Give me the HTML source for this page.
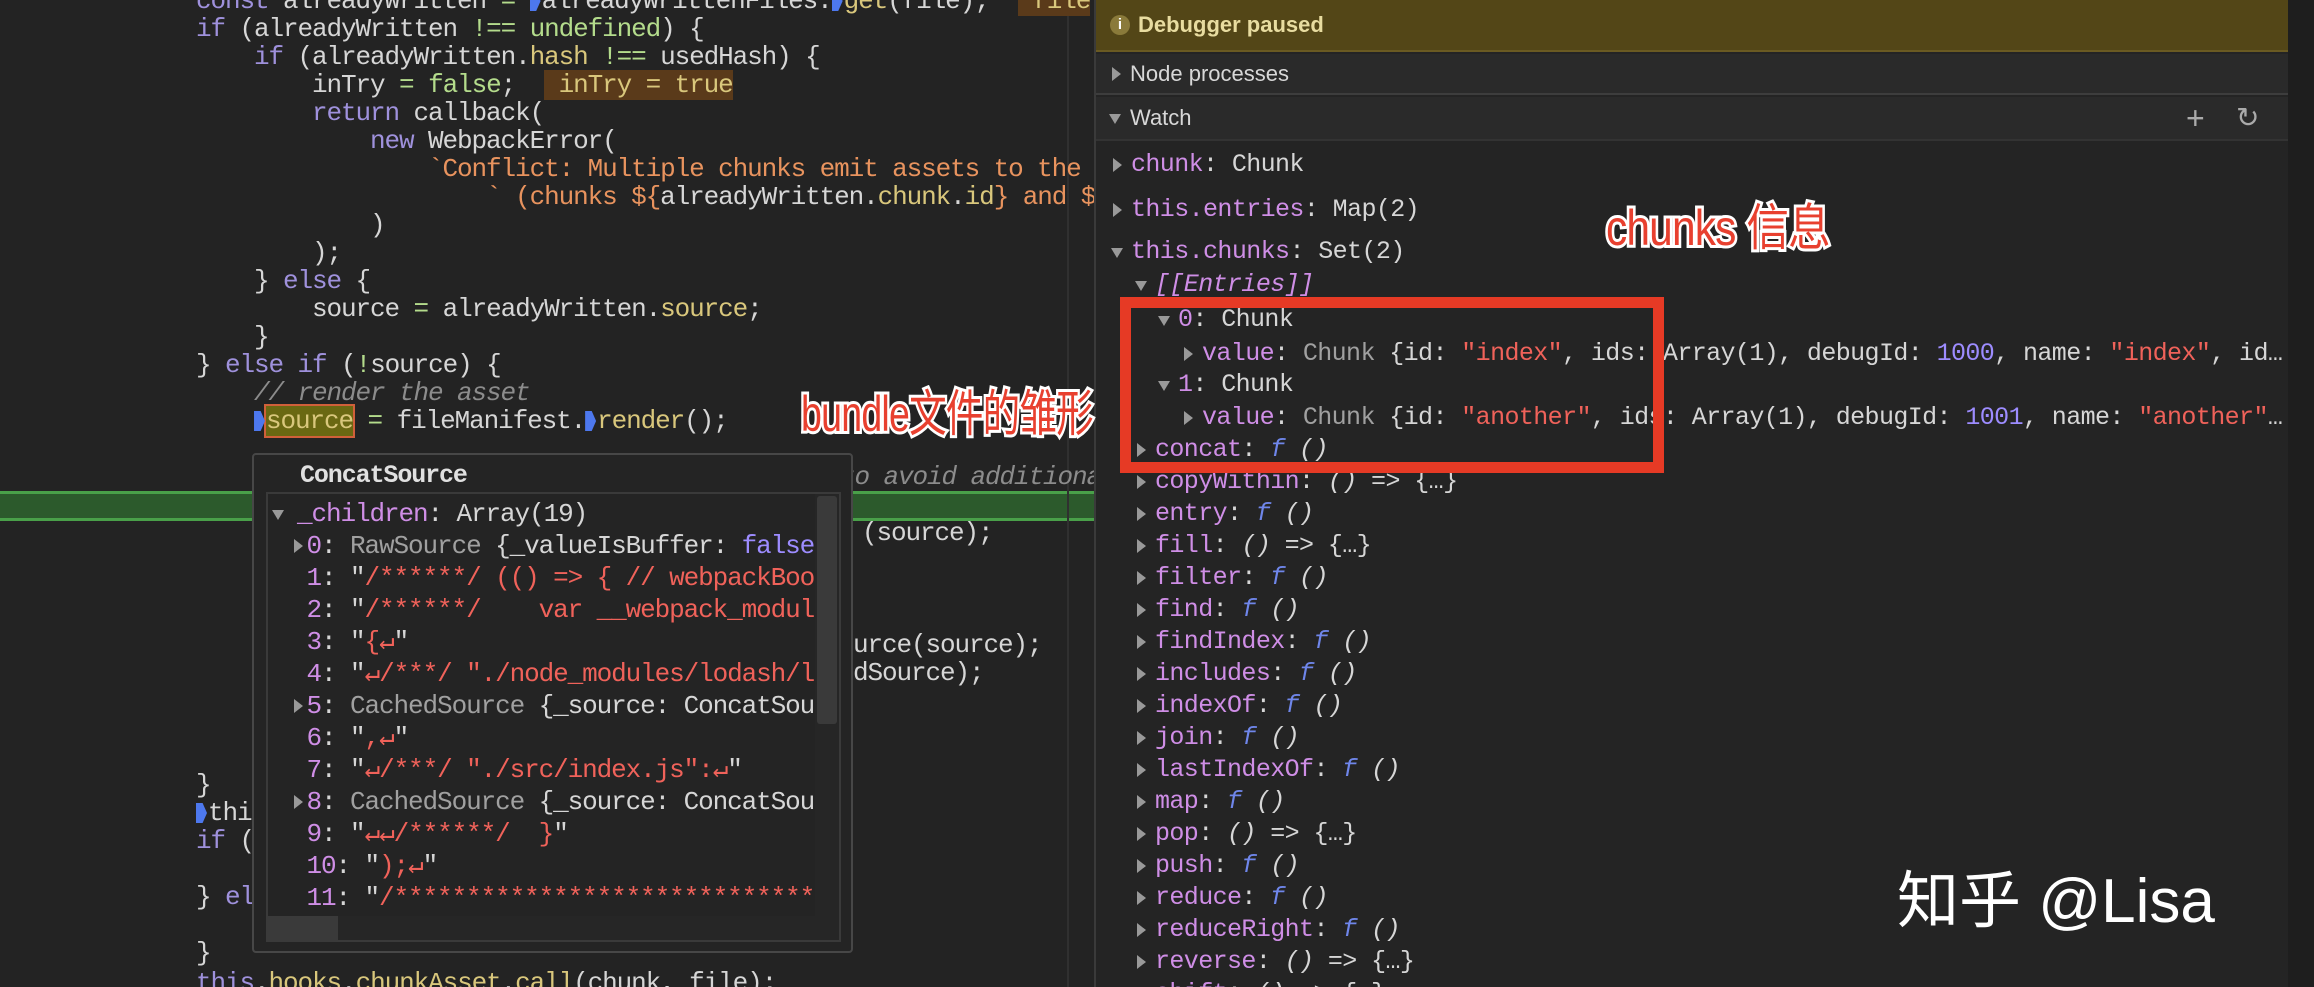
<!DOCTYPE html>
<html><head><meta charset="utf-8"><style>
*{margin:0;padding:0;box-sizing:border-box}
body{width:2314px;height:987px;overflow:hidden;background:#232323;position:relative;font-family:"Liberation Mono",monospace;font-size:26px;letter-spacing:-1.1px;color:#d6d6d6}
.l{position:absolute;white-space:pre;height:28px;line-height:28px}
.k{color:#9f91dc}.g{color:#b4dc8c}.p{color:#d9c77c}.s{color:#e8935e}.c{color:#8c8c8c;font-style:italic}
.bp{display:inline-block;width:11px;height:20px;background:#4d78ee;clip-path:polygon(0 0,60% 0,100% 50%,60% 100%,0 100%);vertical-align:-3px;margin-right:1px}
.r{position:absolute;white-space:pre;height:32px;line-height:32px}
.n{color:#cf8ee6}.v{color:#d6d6d6}.f{color:#6f86ea;font-style:italic}.gr{color:#a0a0a0}.st{color:#f0625a}.num{color:#9d8cff}
.ar{display:inline-block;width:0;height:0;border-left:9px solid #999;border-top:7px solid transparent;border-bottom:7px solid transparent;position:absolute}
.ad{display:inline-block;width:0;height:0;border-top:10px solid #999;border-left:6px solid transparent;border-right:6px solid transparent;position:absolute}
.t{position:absolute;white-space:pre;height:32px;line-height:32px}
.ann{position:absolute;white-space:pre;font-family:"Liberation Sans","Noto Sans CJK SC",sans-serif;font-weight:normal;color:#e8402f;-webkit-text-stroke:6px #fff;paint-order:stroke fill;letter-spacing:-1px;transform-origin:0 0}
</style></head><body>
<!-- code pane -->
<div style="position:absolute;left:0;top:0;width:1094px;height:987px;background:#232323;overflow:hidden">
<div style="position:absolute;left:0;top:491px;width:1094px;height:30px;background:#2c5a2c;border-top:3px solid #49a049;border-bottom:3px solid #49a049"></div>
<div style="position:absolute;left:1067px;top:0;width:2px;height:987px;background:#303030"></div>
<div class="l" style="left:196px;top:-13px"><span class="k">const</span> alreadyWritten <span class="g">=</span> <span class="bp"></span>alreadyWrittenFiles.<span class="bp"></span><span class="p">get</span>(file);  <span style="background:#5a3a1a;color:#d9c77c"> file</span></div>
<div class="l" style="left:196px;top:15px"><span class="k">if</span> (alreadyWritten <span class="g">!==</span> <span class="g">undefined</span>) {</div>
<div class="l" style="left:196px;top:43px">    <span class="k">if</span> (alreadyWritten.<span class="p">hash</span> <span class="g">!==</span> usedHash) {</div>
<div class="l" style="left:196px;top:71px">        inTry <span class="g">=</span> <span class="g">false</span>;  <span style="background:#5a3a1a;color:#d9c77c"> inTry = true</span></div>
<div class="l" style="left:196px;top:99px">        <span class="k">return</span> callback(</div>
<div class="l" style="left:196px;top:127px">            <span class="k">new</span> WebpackError(</div>
<div class="l" style="left:196px;top:155px">                <span class="s">`Conflict: Multiple chunks emit assets to the same</span></div>
<div class="l" style="left:196px;top:183px">                    <span class="s">` (chunks ${</span>alreadyWritten.<span class="p">chunk</span>.<span class="p">id</span><span class="s">} and ${</span></div>
<div class="l" style="left:196px;top:211px">            )</div>
<div class="l" style="left:196px;top:239px">        );</div>
<div class="l" style="left:196px;top:267px">    } <span class="k">else</span> {</div>
<div class="l" style="left:196px;top:295px">        source <span class="g">=</span> alreadyWritten.<span class="p">source</span>;</div>
<div class="l" style="left:196px;top:323px">    }</div>
<div class="l" style="left:196px;top:351px">} <span class="k">else if</span> (<span class="g">!</span>source) {</div>
<div class="l" style="left:196px;top:379px">    <span class="c">// render the asset</span></div>
<div class="l" style="left:196px;top:407px">    <span class="bp"></span><span style="background:#6a6812;color:#d9c77c;outline:2px solid #d0603a">source</span> <span class="g">=</span> fileManifest.<span class="bp"></span><span class="p">render</span>();</div>
<div class="l" style="left:840px;top:463px"><span class="c">to avoid additional</span></div>
<div class="l" style="left:862px;top:519px">(source);</div>
<div class="l" style="left:853px;top:631px">urce(source);</div>
<div class="l" style="left:853px;top:659px">dSource);</div>
<div class="l" style="left:196px;top:771px">}</div>
<div class="l" style="left:196px;top:799px"><span class="bp"></span>this</div>
<div class="l" style="left:196px;top:827px"><span class="k">if</span> (</div>
<div class="l" style="left:196px;top:883px">} <span class="k">el</span></div>
<div class="l" style="left:196px;top:939px">}</div>
<div class="l" style="left:196px;top:969px"><span class="k">this</span>.<span class="p">hooks</span>.<span class="p">chunkAsset</span>.<span class="p">call</span>(chunk, file);</div>
</div>
<!-- tooltip -->
<div style="position:absolute;left:252px;top:453px;width:601px;height:500px;background:#242424;border:2px solid #474747;border-radius:4px;overflow:hidden">
<div style="position:absolute;left:46px;top:6px;font-weight:bold;color:#e0e0e0;font-size:25px;line-height:30px;height:30px">ConcatSource</div>
<div style="position:absolute;left:12px;top:37px;width:575px;height:450px;border:2px solid #3a3a3a"></div>
<div style="position:absolute;left:561px;top:39px;width:24px;height:446px;background:#262626"></div>
<div style="position:absolute;left:563px;top:41px;width:20px;height:228px;background:#3a3a3a;border-radius:3px"></div>
<div style="position:absolute;left:14px;top:461px;width:547px;height:24px;background:#262626"></div>
<div style="position:absolute;left:14px;top:461px;width:70px;height:24px;background:#3a3a3a"></div>
<div style="position:absolute;left:14px;top:43px;width:547px;height:418px;overflow:hidden">
<div class="t" style="left:0;top:0"><span class="ad" style="left:4px;top:12px"></span>  <span class="n">_children</span>: Array(19)</div>
<div class="t" style="left:24px;top:32px"><span class="ar" style="left:2px;top:9px"></span> <span class="n">0</span>: <span class="gr">RawSource</span> {_valueIsBuffer: <span style="color:#9d8cff">false</span>, ...}</div>
<div class="t" style="left:24px;top:64px"> <span class="n">1</span>: "<span class="st">/******/ (() => { // webpackBootstrap</span></div>
<div class="t" style="left:24px;top:96px"> <span class="n">2</span>: "<span class="st">/******/    var __webpack_modules__</span></div>
<div class="t" style="left:24px;top:128px"> <span class="n">3</span>: "<span class="st">{↵</span>"</div>
<div class="t" style="left:24px;top:160px"> <span class="n">4</span>: "<span class="st">↵/***/ "./node_modules/lodash/lodash.js"</span></div>
<div class="t" style="left:24px;top:192px"><span class="ar" style="left:2px;top:9px"></span> <span class="n">5</span>: <span class="gr">CachedSource</span> {_source: ConcatSource</div>
<div class="t" style="left:24px;top:224px"> <span class="n">6</span>: "<span class="st">,↵</span>"</div>
<div class="t" style="left:24px;top:256px"> <span class="n">7</span>: "<span class="st">↵/***/ "./src/index.js":↵</span>"</div>
<div class="t" style="left:24px;top:288px"><span class="ar" style="left:2px;top:9px"></span> <span class="n">8</span>: <span class="gr">CachedSource</span> {_source: ConcatSource</div>
<div class="t" style="left:24px;top:320px"> <span class="n">9</span>: "<span class="st">↵↵/******/  }</span>"</div>
<div class="t" style="left:24px;top:352px"> <span class="n">10</span>: "<span class="st">);↵</span>"</div>
<div class="t" style="left:24px;top:384px"> <span class="n">11</span>: "<span class="st">/**********************************</span></div>
</div>
</div>
<!-- right pane -->
<div style="position:absolute;left:1094px;top:0;width:1194px;height:987px;background:#242424;border-left:2px solid #3a3a3a;overflow:hidden;font-size:25px;letter-spacing:-0.6px">
<div style="position:absolute;left:0;top:0;width:1194px;height:52px;background:#534617;border-bottom:2px solid #6a5a22;font-family:'Liberation Sans',sans-serif;letter-spacing:0;font-size:22px;color:#e8dca0;font-weight:bold;line-height:50px;padding-left:42px">Debugger paused<span style="position:absolute;left:14px;top:15px;width:20px;height:20px;border-radius:50%;background:#8a7a3a;color:#fff;font-size:15px;line-height:20px;text-align:center">i</span></div>
<div style="position:absolute;left:0;top:54px;width:1194px;height:41px;background:#2a2a2a;border-bottom:2px solid #3d3d3d;font-family:'Liberation Sans',sans-serif;letter-spacing:0;font-size:22px;line-height:40px;color:#d8d8d8;padding-left:34px">Node processes<span class="ar" style="left:16px;top:13px"></span></div>
<div style="position:absolute;left:0;top:97px;width:1194px;height:44px;background:#2a2a2a;border-bottom:2px solid #333;font-family:'Liberation Sans',sans-serif;letter-spacing:0;font-size:22px;line-height:42px;color:#d8d8d8;padding-left:34px">Watch<span class="ad" style="left:13px;top:17px"></span><span style="position:absolute;left:1090px;top:0;color:#aaa;font-size:32px">+</span><span style="position:absolute;left:1140px;top:0;color:#aaa;font-size:28px">↻</span></div>
<div class="r" style="left:35px;top:149px"><span class="ar" style="left:-18px;top:9px"></span><span class="n">chunk</span>: Chunk</div>
<div class="r" style="left:35px;top:194px"><span class="ar" style="left:-18px;top:9px"></span><span class="n">this.entries</span>: Map(2)</div>
<div class="r" style="left:35px;top:236px"><span class="ad" style="left:-20px;top:12px"></span><span class="n">this.chunks</span>: Set(2)</div>
<div class="r" style="left:59px;top:269px"><span class="ad" style="left:-20px;top:12px"></span><span class="n" style="font-style:italic">[[Entries]]</span></div>
<div class="r" style="left:82px;top:304px"><span class="ad" style="left:-20px;top:12px"></span><span class="n">0</span>: Chunk</div>
<div class="r" style="left:106px;top:338px"><span class="ar" style="left:-18px;top:9px"></span><span class="n">value</span>: <span class="gr">Chunk</span> {id: <span class="st">"index"</span>, ids: Array(1), debugId: <span class="num">1000</span>, name: <span class="st">"index"</span>, id…</div>
<div class="r" style="left:82px;top:369px"><span class="ad" style="left:-20px;top:12px"></span><span class="n">1</span>: Chunk</div>
<div class="r" style="left:106px;top:402px"><span class="ar" style="left:-18px;top:9px"></span><span class="n">value</span>: <span class="gr">Chunk</span> {id: <span class="st">"another"</span>, ids: Array(1), debugId: <span class="num">1001</span>, name: <span class="st">"another"</span>…</div>
<div class="r" style="left:59px;top:434px"><span class="ar" style="left:-18px;top:9px"></span><span class="n">concat</span>: <span class="f">f</span> <i>()</i></div>
<div class="r" style="left:59px;top:466px"><span class="ar" style="left:-18px;top:9px"></span><span class="n">copyWithin</span>: <i>()</i> => {…}</div>
<div class="r" style="left:59px;top:498px"><span class="ar" style="left:-18px;top:9px"></span><span class="n">entry</span>: <span class="f">f</span> <i>()</i></div>
<div class="r" style="left:59px;top:530px"><span class="ar" style="left:-18px;top:9px"></span><span class="n">fill</span>: <i>()</i> => {…}</div>
<div class="r" style="left:59px;top:562px"><span class="ar" style="left:-18px;top:9px"></span><span class="n">filter</span>: <span class="f">f</span> <i>()</i></div>
<div class="r" style="left:59px;top:594px"><span class="ar" style="left:-18px;top:9px"></span><span class="n">find</span>: <span class="f">f</span> <i>()</i></div>
<div class="r" style="left:59px;top:626px"><span class="ar" style="left:-18px;top:9px"></span><span class="n">findIndex</span>: <span class="f">f</span> <i>()</i></div>
<div class="r" style="left:59px;top:658px"><span class="ar" style="left:-18px;top:9px"></span><span class="n">includes</span>: <span class="f">f</span> <i>()</i></div>
<div class="r" style="left:59px;top:690px"><span class="ar" style="left:-18px;top:9px"></span><span class="n">indexOf</span>: <span class="f">f</span> <i>()</i></div>
<div class="r" style="left:59px;top:722px"><span class="ar" style="left:-18px;top:9px"></span><span class="n">join</span>: <span class="f">f</span> <i>()</i></div>
<div class="r" style="left:59px;top:754px"><span class="ar" style="left:-18px;top:9px"></span><span class="n">lastIndexOf</span>: <span class="f">f</span> <i>()</i></div>
<div class="r" style="left:59px;top:786px"><span class="ar" style="left:-18px;top:9px"></span><span class="n">map</span>: <span class="f">f</span> <i>()</i></div>
<div class="r" style="left:59px;top:818px"><span class="ar" style="left:-18px;top:9px"></span><span class="n">pop</span>: <i>()</i> => {…}</div>
<div class="r" style="left:59px;top:850px"><span class="ar" style="left:-18px;top:9px"></span><span class="n">push</span>: <span class="f">f</span> <i>()</i></div>
<div class="r" style="left:59px;top:882px"><span class="ar" style="left:-18px;top:9px"></span><span class="n">reduce</span>: <span class="f">f</span> <i>()</i></div>
<div class="r" style="left:59px;top:914px"><span class="ar" style="left:-18px;top:9px"></span><span class="n">reduceRight</span>: <span class="f">f</span> <i>()</i></div>
<div class="r" style="left:59px;top:946px"><span class="ar" style="left:-18px;top:9px"></span><span class="n">reverse</span>: <i>()</i> => {…}</div>
<div class="r" style="left:59px;top:978px"><span class="ar" style="left:-18px;top:9px"></span><span class="n">shift</span>: <i>()</i> => {…}</div>
</div>
<div style="position:absolute;left:2288px;top:0;width:26px;height:987px;background:#1e1e1e"></div>
<!-- annotations -->
<div style="position:absolute;left:1120px;top:297px;width:544px;height:176px;border:11px solid #e63a25"></div>
<div class="ann" style="left:1606px;top:188px;font-size:50px;transform:scaleX(0.85)">chunks 信息</div>
<div class="ann" style="left:801px;top:374px;font-size:50px;transform:scaleX(0.75)">bundle文件的雏形</div>
<div style="position:absolute;left:1897px;top:850px;font-family:'Liberation Sans','Noto Sans CJK SC',sans-serif;font-size:62px;color:#fff;letter-spacing:0;white-space:pre">知乎 @Lisa</div>
</body></html>
